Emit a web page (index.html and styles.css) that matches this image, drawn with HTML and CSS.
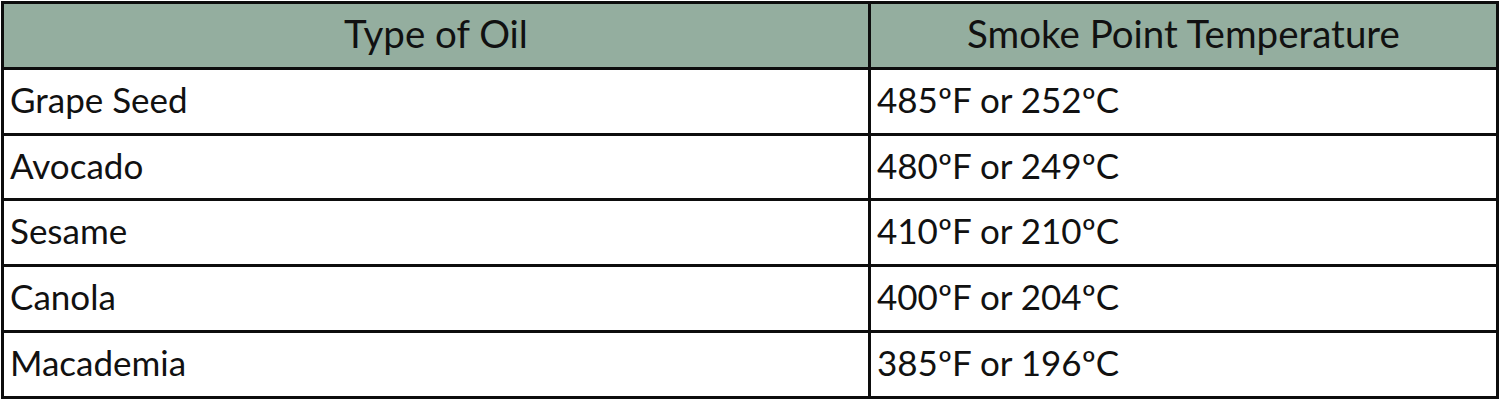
FILE: index.html
```html
<!DOCTYPE html>
<html>
<head>
<meta charset="utf-8">
<link rel="stylesheet" href="styles.css">
</head>
<body>
<div class="table">
  <div class="cell head">Type of Oil</div>
  <div class="cell head">Smoke Point Temperature</div>
  <div class="cell">Grape Seed</div>
  <div class="cell">485ºF or 252ºC</div>
  <div class="cell">Avocado</div>
  <div class="cell">480ºF or 249ºC</div>
  <div class="cell">Sesame</div>
  <div class="cell">410ºF or 210ºC</div>
  <div class="cell">Canola</div>
  <div class="cell">400ºF or 204ºC</div>
  <div class="cell">Macademia</div>
  <div class="cell">385ºF or 196ºC</div>
</div>
</body>
</html>
```
FILE: styles.css
```css
html, body {
  margin: 0;
  padding: 0;
  background: #ffffff;
}
body {
  padding: 1px 0 0 1px;
  font-family: Lato, "Liberation Sans", sans-serif;
  color: #111111;
}
.table {
  box-sizing: border-box;
  width: 1498px;
  height: 398px;
  background: #0d0d0d;
  padding: 3px;
  display: grid;
  grid-template-columns: 864px 625px;
  grid-template-rows: repeat(6, 1fr);
  gap: 3px;
}
.cell {
  background: #ffffff;
  display: flex;
  align-items: center;
  padding: 0 0 4px 6px;
  font-size: 35px;
  line-height: 1;
}
.head {
  background: #94ae9f;
  justify-content: center;
  padding: 0 0 4px 0;
  font-size: 38.5px;
}
```
